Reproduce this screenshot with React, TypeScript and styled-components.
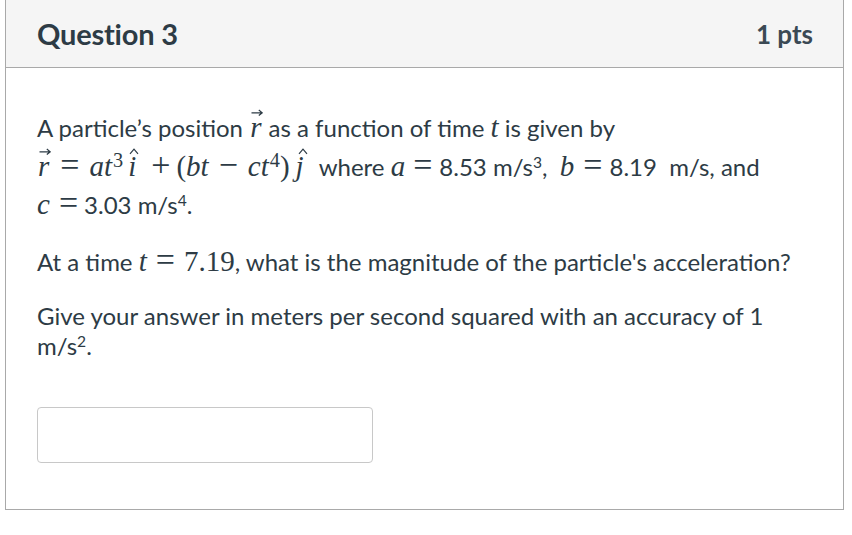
import React from "react";
import styled, { createGlobalStyle } from "styled-components";

const GlobalStyle = createGlobalStyle`
  body {
    margin: 0;
    background: #ffffff;
    font-family: Lato, "Open Sans", sans-serif;
    color: #2d3b45;
  }
`;

const Scard = styled.div`
  margin: -1px 8px 0 5px;
  border: 1px solid #a9a9a9;
  background: #ffffff;
`;

const Sheader = styled.div`
  display: flex;
  align-items: center;
  justify-content: space-between;
  height: 68px;
  padding: 0 30px 0 31px;
  background: #f5f5f5;
  border-bottom: 1px solid #a9a9a9;
  box-sizing: border-box;
`;

const Stitle = styled.div`
  font-size: 29px;
  font-weight: 700;
  letter-spacing: -0.2px;
`;

const Spoints = styled.div`
  font-size: 26px;
  font-weight: 700;
  color: #3b4954;
`;

const Sbody = styled.div`
  padding: 41px 31px 46px;
`;

const Spara = styled.p<{ $lh?: number; $mb?: number }>`
  margin: 0 0 ${(p) => p.$mb ?? 24}px;
  font-size: 24px;
  line-height: ${(p) => p.$lh ?? 30}px;
`;

const Smath = styled.span<{ $mr?: number }>`
  font-family: "Liberation Serif", "DejaVu Serif", serif;
  font-size: 29px;
  line-height: 0;
  white-space: nowrap;
  margin-right: ${(p) => p.$mr ?? 0}px;
`;

const Svar = styled.i`
  font-style: italic;
  font-family: "Liberation Serif", "DejaVu Serif", serif;
  font-size: 29px;
  line-height: 1;
`;

const Sop = styled.span<{ $l?: number; $r?: number }>`
  font-style: normal;
  font-family: "Liberation Serif", "DejaVu Serif", serif;
  font-size: 34px;
  line-height: 0;
  margin: 0 ${(p) => p.$r ?? 9}px 0 ${(p) => p.$l ?? 9}px;
`;

const Ssup = styled.sup`
  font-size: 0.7em;
  line-height: 0;
  vertical-align: baseline;
  position: relative;
  top: -0.42em;
  margin-left: 1px;
`;

const StextSup = styled.sup`
  font-size: 0.65em;
  line-height: 0;
  vertical-align: baseline;
  position: relative;
  top: -0.5em;
`;

const Saccent = styled.span<{ $pl?: number; $pr?: number }>`
  position: relative;
  display: inline-block;
  line-height: 1;
  padding: 0 ${(p) => p.$pr ?? 1}px 0 ${(p) => p.$pl ?? 1}px;
`;

const SarrowMark = styled.svg`
  position: absolute;
  left: 2px;
  top: -4px;
  width: 12px;
  height: 7px;
`;

const ShatMark = styled.svg<{ $left: number }>`
  position: absolute;
  left: ${(p) => p.$left}px;
  top: -4px;
  width: 10px;
  height: 7px;
`;

const Sanswer = styled.input`
  display: block;
  width: 336px;
  height: 56px;
  margin-top: 46px;
  box-sizing: border-box;
  border: 1px solid #c8c8c8;
  border-radius: 4px;
  background: #ffffff;
  outline: none;
`;

const Vec: React.FC<{ children: React.ReactNode }> = ({ children }) => (
  <Saccent>
    <Svar>{children}</Svar>
    <SarrowMark viewBox="0 0 12 7">
      <path d="M0.5 3.8 H10.8 M7.8 1 L11.2 3.8 L7.8 6.4" stroke="#2d3b45" strokeWidth="1.2" fill="none" />
    </SarrowMark>
  </Saccent>
);

const Hat: React.FC<{ children: React.ReactNode; left: number; pl?: number }> = ({ children, left, pl }) => (
  <Saccent $pl={pl}>
    <Svar>{children}</Svar>
    <ShatMark $left={left} viewBox="0 0 10 7">
      <path d="M1 5.8 L5 1.2 L9 5.8" stroke="#2d3b45" strokeWidth="1.2" fill="none" />
    </ShatMark>
  </Saccent>
);

const App: React.FC = () => {
  return (
    <>
      <GlobalStyle />
      <Scard>
        <Sheader>
          <Stitle>Question 3</Stitle>
          <Spoints>1 pts</Spoints>
        </Sheader>
        <Sbody>
          <Spara $lh={38.5} $mb={22}>
            A particle’s position <Vec>r</Vec> as a function of time <Svar>t</Svar> is given by
            <br />
            <Smath $mr={14}>
              <Vec>r</Vec>
              <Sop $l={10} $r={10}>=</Sop>
              <Svar>at</Svar>
              <Ssup>3</Ssup>
              <Hat left={6} pl={5}>i</Hat>
              <Sop $l={14} $r={6}>+</Sop>(<Svar>bt</Svar>
              <Sop $l={10} $r={10}>−</Sop>
              <Svar>ct</Svar>
              <Ssup>4</Ssup>)
              <Hat left={8} pl={6}>j</Hat>
            </Smath>
            where{" "}
            <Smath>
              <Svar>a</Svar>
              <Sop $l={8} $r={7}>=</Sop>
            </Smath>
            8.53 m/s<StextSup>3</StextSup>,&nbsp;{" "}
            <Smath>
              <Svar>b</Svar>
              <Sop $l={9} $r={7}>=</Sop>
            </Smath>
            8.19&nbsp; m/s, and
            <br />
            <Smath>
              <Svar>c</Svar>
              <Sop $l={9} $r={6}>=</Sop>
            </Smath>
            3.03 m/s<StextSup>4</StextSup>.
          </Spara>
          <Spara>
            At a time{" "}
            <Smath>
              <Svar>t</Svar>
              <Sop>=</Sop>7.19
            </Smath>
            , what is the magnitude of the particle's acceleration?
          </Spara>
          <Spara>
            Give your answer in meters per second squared with an accuracy of 1 m/s<StextSup>2</StextSup>.
          </Spara>
          <Sanswer type="text" aria-label="answer" />
        </Sbody>
      </Scard>
    </>
  );
};

export default App;
